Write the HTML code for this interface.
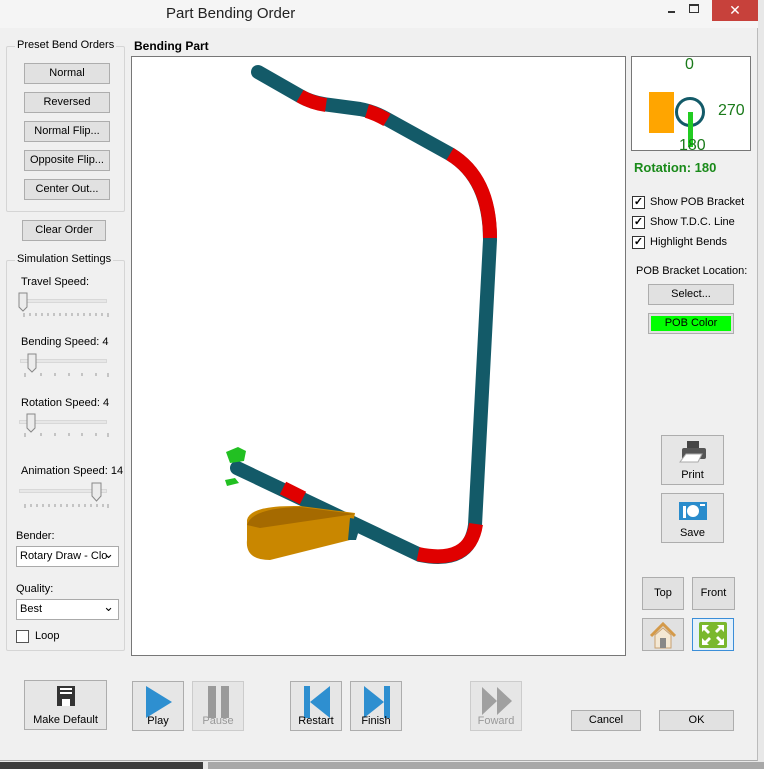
<!DOCTYPE html>
<html><head><meta charset="utf-8"><style>
*{box-sizing:border-box;margin:0;padding:0}
body{width:764px;height:769px;background:#e8e8e8;font-family:"Liberation Sans",sans-serif;font-size:11px;color:#000;position:relative;overflow:hidden}
.win{position:absolute;left:0;top:0;width:758px;height:761px;background:#f0f0f0;border-right:1px solid #bbb;border-bottom:1px solid #aaa}
.title{position:absolute;left:0;top:0;width:758px;height:28px;background:#f5f5f5}
.abs{position:absolute}
.btn{position:absolute;background:#e1e1e1;border:1px solid #adadad;text-align:center;font-size:11px;line-height:19px}
.grp{position:absolute;border:1px solid #d5d5d5;border-radius:2px}
.grp>span{position:absolute;top:-8px;left:8px;background:#f0f0f0;padding:0 2px;font-size:11px}
.chk{position:absolute;width:13px;height:13px;border:1px solid #333;background:#fff;font-size:11px;line-height:11px;text-align:center;font-weight:bold}
.trk{position:absolute;height:4px;border:1px solid #d8d8d8;background:#e7e7e7}
.sel{position:absolute;height:21px;background:#fff;border:1px solid #aaa;font-size:11px;line-height:19px;padding-left:3px}
.sel:after{content:"⌄";position:absolute;right:4px;top:-3px;font-size:13px}
.big{position:absolute;background:#e6e6e6;border:1px solid #adadad;text-align:center;font-size:11px}
.big span{position:absolute;left:0;right:0;bottom:3px}
</style></head><body>
<div class="win">
<div class="title"></div>
<div class="abs" style="left:166px;top:5px;font-size:15px;color:#222">Part Bending Order</div>
<div class="abs" style="left:668px;top:11px;width:7px;height:2px;background:#333"></div>
<div class="abs" style="left:689px;top:4px;width:10px;height:9px;border:1px solid #333;border-top-width:2px"></div>
<div class="abs" style="left:712px;top:0;width:46px;height:21px;background:#c7413b;color:#fff;text-align:center;font-size:14px;line-height:20px">✕</div>

<div class="grp" style="left:6px;top:46px;width:119px;height:166px"><span>Preset Bend Orders</span></div>
<div class="btn" style="left:24px;top:63px;width:86px;height:21px">Normal</div>
<div class="btn" style="left:24px;top:92px;width:86px;height:21px">Reversed</div>
<div class="btn" style="left:24px;top:121px;width:86px;height:21px">Normal Flip...</div>
<div class="btn" style="left:24px;top:150px;width:86px;height:21px">Opposite Flip...</div>
<div class="btn" style="left:24px;top:179px;width:86px;height:21px">Center Out...</div>
<div class="btn" style="left:22px;top:220px;width:84px;height:21px">Clear Order</div>

<div class="grp" style="left:6px;top:260px;width:119px;height:391px"><span>Simulation Settings</span></div>
<div class="abs" style="left:21px;top:276px">Travel Speed:</div>
<div class="trk" style="left:20px;top:299px;width:87px"></div>
<svg class="abs" style="left:18px;top:292px" width="95" height="30"><path d="M1 1h8v14l-4 4l-4-4z" fill="#ececec" stroke="#888"/><g stroke="#999"><path d="M6 21v4M12 21v3M18 21v3M24 21v3M30 21v3M36 21v3M42 21v3M48 21v3M54 21v3M60 21v3M66 21v3M72 21v3M78 21v3M84 21v3M90 21v4"/></g></svg>
<div class="abs" style="left:21px;top:336px">Bending Speed: 4</div>
<div class="trk" style="left:20px;top:359px;width:87px"></div>
<svg class="abs" style="left:27px;top:353px" width="80" height="30"><path d="M1 1h8v14l-4 4l-4-4z" fill="#ececec" stroke="#888"/></svg>
<svg class="abs" style="left:18px;top:372px" width="95" height="8"><g stroke="#999"><path d="M7 1v4M23 1v3M37 1v3M51 1v3M64 1v3M78 1v3M90 1v4"/></g></svg>
<div class="abs" style="left:21px;top:397px">Rotation Speed: 4</div>
<div class="trk" style="left:19px;top:420px;width:88px"></div>
<svg class="abs" style="left:26px;top:413px" width="80" height="30"><path d="M1 1h8v14l-4 4l-4-4z" fill="#ececec" stroke="#888"/></svg>
<svg class="abs" style="left:18px;top:432px" width="95" height="8"><g stroke="#999"><path d="M7 1v4M23 1v3M37 1v3M51 1v3M64 1v3M78 1v3M90 1v4"/></g></svg>
<div class="abs" style="left:21px;top:465px">Animation Speed: 14</div>
<div class="trk" style="left:19px;top:489px;width:88px"></div>
<svg class="abs" style="left:91px;top:482px" width="14" height="22"><path d="M1 1h9v13l-4.5 5l-4.5-5z" fill="#ececec" stroke="#888"/></svg>
<svg class="abs" style="left:18px;top:503px" width="95" height="8"><g stroke="#999"><path d="M7 1v4M13 1v3M19 1v3M25 1v3M31 1v3M37 1v3M43 1v3M49 1v3M55 1v3M61 1v3M67 1v3M73 1v3M79 1v3M85 1v3M90 1v4"/></g></svg>
<div class="abs" style="left:16px;top:530px">Bender:</div>
<div class="sel" style="left:16px;top:546px;width:103px">Rotary Draw - Clo</div>
<div class="abs" style="left:16px;top:583px">Quality:</div>
<div class="sel" style="left:16px;top:599px;width:103px">Best</div>
<div class="chk" style="left:16px;top:630px;border-color:#555"></div>
<div class="abs" style="left:35px;top:630px">Loop</div>

<div class="abs" style="left:134px;top:39px;font-weight:bold;font-size:12px">Bending Part</div>
<div class="abs" style="left:131px;top:56px;width:495px;height:600px;background:#fff;border:1px solid #777"></div>
<svg class="abs" style="left:0;top:0" width="640" height="660">
<g fill="none" stroke-width="14" stroke-linejoin="round">
<path d="M258 72 L300 96 Q312 103 330 105 L360 109 Q372 111 385 118 L450 154 Q490 178 490 240 L475 525 Q470 565 420 555 L237 468" stroke="#135a68" stroke-linecap="round"/>
<path d="M300 96 Q312 103 326 105" stroke="#e00000"/>
<path d="M367 111 Q377 114 387 120" stroke="#e00000"/>
<path d="M450 154 Q490 178 490 238" stroke="#e00000"/>
<path d="M476 524 Q470 565 418 554" stroke="#e00000"/>
<path d="M283 488 L303 498" stroke="#e00000"/>
</g>
<path d="M247 520 Q250 505 300 506 L355 513 L350 540 L270 560 Q245 560 247 540 Z" fill="#c98700"/>
<path d="M247 525 Q252 508 300 507 L355 514 L260 528 Z" fill="#a56a00"/>
<path d="M350 518 L362 520 L356 540 L348 540 Z" fill="#135a68"/>
<path d="M226 452 l12-5 l8 4 l-2 10 l-14 2z M225 480 l10-2 l4 5 l-12 3z" fill="#22c022"/>
</svg>

<div class="abs" style="left:631px;top:56px;width:120px;height:95px;background:#fff;border:1px solid #777"></div>
<div class="abs" style="left:685px;top:56px;color:#1a7a1a;font-size:16px">0</div>
<div class="abs" style="left:649px;top:92px;width:25px;height:41px;background:#ffa500"></div>
<div class="abs" style="left:675px;top:97px;width:30px;height:30px;border:3px solid #135a68;border-radius:50%"></div>
<div class="abs" style="left:688px;top:112px;width:5px;height:35px;background:#22cc22"></div>
<div class="abs" style="left:718px;top:102px;color:#1a7a1a;font-size:16px">270</div>
<div class="abs" style="left:679px;top:137px;color:#1a7a1a;font-size:16px">180</div>
<div class="abs" style="left:634px;top:160px;color:#1a8a1a;font-size:13px;font-weight:bold">Rotation: 180</div>
<div class="chk" style="left:632px;top:196px">✓</div><div class="abs" style="left:650px;top:196px">Show POB Bracket</div>
<div class="chk" style="left:632px;top:216px">✓</div><div class="abs" style="left:650px;top:216px">Show T.D.C. Line</div>
<div class="chk" style="left:632px;top:236px">✓</div><div class="abs" style="left:650px;top:236px">Highlight Bends</div>
<div class="abs" style="left:636px;top:265px">POB Bracket Location:</div>
<div class="btn" style="left:648px;top:284px;width:86px;height:21px">Select...</div>
<div class="btn" style="left:648px;top:313px;width:86px;height:21px;padding:2px"><div style="background:#00ff00;height:15px;line-height:15px">POB Color</div></div>

<div class="big" style="left:661px;top:435px;width:63px;height:50px">
<svg class="abs" style="left:16px;top:4px" width="30" height="26"><rect x="9" y="1" width="12" height="8" fill="#444"/><rect x="4" y="8" width="24" height="11" rx="2" fill="#555"/><path d="M2 22 L8 14 L24 14 L20 22Z" fill="#fff" stroke="#aaa"/></svg><span>Print</span></div>
<div class="big" style="left:661px;top:493px;width:63px;height:50px">
<svg class="abs" style="left:16px;top:6px" width="30" height="22"><rect x="1" y="2" width="28" height="18" fill="#2a8ccc"/><circle cx="15" cy="11" r="6" fill="#fff"/><rect x="5" y="6" width="3" height="12" fill="#fff"/><rect x="22" y="4" width="5" height="2" fill="#fff"/></svg><span>Save</span></div>
<div class="btn" style="left:642px;top:577px;width:42px;height:33px;line-height:31px">Top</div>
<div class="btn" style="left:692px;top:577px;width:43px;height:33px;line-height:31px">Front</div>
<div class="btn" style="left:642px;top:618px;width:42px;height:33px">
<svg width="30" height="30" style="margin-top:1px"><path d="M3 16 L15 4 L27 16" fill="none" stroke="#d49a4a" stroke-width="3"/><path d="M7 15 V28 H23 V15 L15 8Z" fill="#f4e8d4" stroke="#c8a070"/><rect x="12" y="18" width="6" height="10" fill="#888"/></svg></div>
<div class="btn" style="left:692px;top:618px;width:42px;height:33px;border-color:#3b8ed8;background:#e5f1fb">
<svg width="30" height="28" style="margin-top:2px"><rect x="1" y="1" width="28" height="26" rx="2" fill="#7ab82e"/><g fill="#fff"><path d="M4 4h7l-3 3 4 4-2 2-4-4-2 2z M26 4v7l-3-3-4 4-2-2 4-4-2-2z M4 24v-7l3 3 4-4 2 2-4 4 2 2z M26 24h-7l3-3-4-4 2-2 4 4 2-2z"/></g></svg></div>

<div class="big" style="left:24px;top:680px;width:83px;height:50px"><svg class="abs" style="left:31px;top:4px" width="20" height="22"><path d="M1 1h18v20H1z" fill="#333"/><rect x="4" y="3" width="12" height="2" fill="#fff"/><rect x="4" y="7" width="12" height="2" fill="#fff"/><rect x="6" y="14" width="8" height="7" fill="#fff"/></svg><span>Make Default</span></div>
<div class="big" style="left:132px;top:681px;width:52px;height:50px"><svg class="abs" style="left:11px;top:3px" width="30" height="34"><path d="M2 1 L28 17 L2 33Z" fill="#2e8fd0"/></svg><span>Play</span></div>
<div class="big" style="left:192px;top:681px;width:52px;height:50px;color:#999;border-color:#ccc"><svg class="abs" style="left:13px;top:3px" width="26" height="34"><rect x="2" y="1" width="8" height="32" fill="#9a9a9a"/><rect x="15" y="1" width="8" height="32" fill="#9a9a9a"/></svg><span>Pause</span></div>
<div class="big" style="left:290px;top:681px;width:52px;height:50px"><svg class="abs" style="left:12px;top:3px" width="28" height="34"><rect x="1" y="1" width="6" height="32" fill="#2e8fd0"/><path d="M27 1 L7 17 L27 33Z" fill="#2e8fd0"/></svg><span>Restart</span></div>
<div class="big" style="left:350px;top:681px;width:52px;height:50px"><svg class="abs" style="left:12px;top:3px" width="28" height="34"><rect x="21" y="1" width="6" height="32" fill="#2e8fd0"/><path d="M1 1 L21 17 L1 33Z" fill="#2e8fd0"/></svg><span>Finish</span></div>
<div class="big" style="left:470px;top:681px;width:52px;height:50px;color:#999;border-color:#ccc"><svg class="abs" style="left:10px;top:4px" width="32" height="30"><path d="M1 1 L16 15 L1 29Z M16 1 L31 15 L16 29Z" fill="#a0a0a0"/></svg><span>Foward</span></div>
<div class="btn" style="left:571px;top:710px;width:70px;height:21px">Cancel</div>
<div class="btn" style="left:659px;top:710px;width:75px;height:21px">OK</div>
</div>
<div class="abs" style="left:0;top:762px;width:203px;height:7px;background:#3c3c3c"></div>
<div class="abs" style="left:208px;top:762px;width:556px;height:7px;background:#a8a8a8"></div>
</body></html>
